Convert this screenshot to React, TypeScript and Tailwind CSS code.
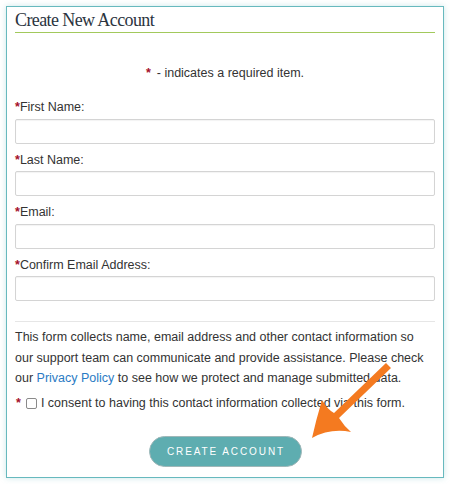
import React from 'react'

const fields = ['First Name:', 'Last Name:', 'Email:', 'Confirm Email Address:']

function Req() {
  return <span className="text-[#a4102c] font-bold">*</span>
}

function Field({ label }: { label: string }) {
  return (
    <div className="mb-[6px]">
      <label className="flex h-[20px] items-center text-[12.5px] leading-[20px] text-[#333]">
        <Req />
        {label}
      </label>
      <div className="mt-[1.5px] h-[25px] rounded-[2px] border border-[#d4d4d4] bg-white shadow-[inset_0_1px_1px_rgba(0,0,0,0.05)]" />
    </div>
  )
}

export default function App() {
  return (
    <div className="relative h-[484px] w-[450px] bg-white font-['Liberation_Sans',Arial,sans-serif]">
      <div className="ml-[6px] pt-[6px]">
        <div className="h-[472px] w-[438px] border border-[#67b9be] bg-white px-[8px] shadow-[0_0_6px_rgba(103,185,190,0.35)]">
          <h1 className="border-b border-[#a2c95c] pt-[2px] font-['Liberation_Serif','Times_New_Roman',serif] text-[18px] leading-[23px] tracking-[-0.6px] text-[#2b3440]">
            Create New Account
          </h1>

          <p className="mt-[30px] text-center text-[12.5px] leading-[20px] text-[#333]">
            <Req />
            <span className="ml-[6px]">- indicates a required item.</span>
          </p>

          <div className="mt-[14px]">
            {fields.map((f) => (
              <Field key={f} label={f} />
            ))}
          </div>

          <div className="mt-[20px] border-t border-[#e6e6e6]" />

          <p className="mt-[5px] text-[12.5px] leading-[20.5px] text-[#333]">
            This form collects name, email address and other contact information so our support
            team can communicate and provide assistance. Please check our{' '}
            <a className="text-[#2b7bc4]">Privacy Policy</a> to see how we protect and manage
            submitted data.
          </p>

          <div className="mt-[5px] flex h-[20px] items-center text-[12.5px] text-[#333]">
            <span className="ml-[1px]">
              <Req />
            </span>
            <span className="ml-[5px] h-[11px] w-[11px] rounded-[2px] border border-[#8a8a8a] bg-white" />
            <span className="ml-[4px]">
              I consent to having this contact information collected via this form.
            </span>
          </div>

          <div className="mt-[22px] flex justify-center">
            <button className="h-[31px] w-[153px] rounded-full border border-[#9fb7b8] bg-[#5eadb0] pl-[2px] text-[10px] tracking-[1.9px] text-white">
              CREATE ACCOUNT
            </button>
          </div>
        </div>
      </div>

      <svg
        className="pointer-events-none absolute left-0 top-0"
        width="450"
        height="484"
        viewBox="0 0 450 484"
      >
        <path
          d="M386 363 L391 368 L339 418 Q344 426 351 432 Q330 428 312 438 Q316 420 322 400 Q327 409 334 413 Z"
          fill="#f47a20"
        />
      </svg>
    </div>
  )
}
